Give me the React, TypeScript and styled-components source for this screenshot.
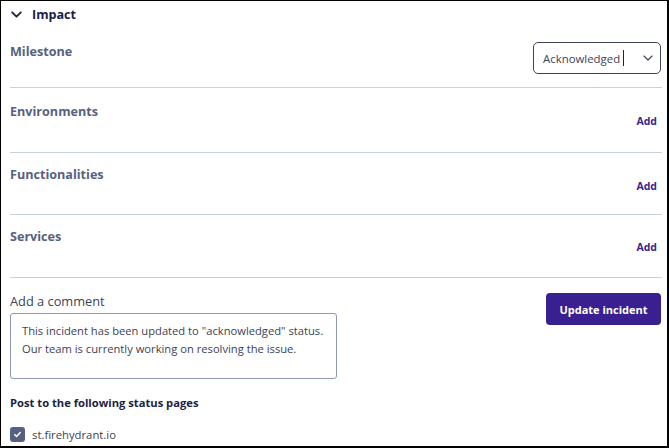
import React from "react";
import styled, { createGlobalStyle } from "styled-components";

const GlobalStyle = createGlobalStyle`
  html, body {
    margin: 0;
    padding: 0;
    background: #ffffff;
  }
  body {
    font-family: "Open Sans", "Liberation Sans", sans-serif;
    color: #3c4257;
  }
`;

const Frame = styled.div`
  box-sizing: border-box;
  width: 669px;
  height: 448px;
  border-top: 1px solid #000;
  border-left: 1px solid #000;
  border-right: 2px solid #000;
  border-bottom: 2px solid #000;
  padding: 0 5px 0 9px;
  overflow: hidden;
`;

const SectionHeader = styled.div`
  display: flex;
  align-items: center;
  gap: 9px;
  height: 28px;
  margin-top: -1px;
  font-size: 12.6px;
  font-weight: 700;
  color: #1c2340;
  svg {
    flex-shrink: 0;
  }
`;

const Row = styled.div<{ $h: number; $pt: number }>`
  box-sizing: border-box;
  display: flex;
  justify-content: space-between;
  align-items: flex-start;
  height: ${(p) => p.$h}px;
  padding-top: ${(p) => p.$pt}px;
  border-bottom: 1px solid #c8d0e0;
`;

const RowTitle = styled.div`
  font-size: 12.6px;
  font-weight: 700;
  line-height: 20px;
  color: #56617f;
`;

const AddLink = styled.button<{ $mt: number }>`
  margin-top: ${(p) => p.$mt}px;
  padding: 0 5px 0 0;
  border: none;
  background: none;
  font-family: inherit;
  font-size: 10.5px;
  font-weight: 700;
  line-height: 16px;
  color: #3a1f91;
  cursor: pointer;
`;

const Select = styled.div`
  box-sizing: border-box;
  display: flex;
  align-items: center;
  width: 128px;
  height: 32px;
  margin-right: 1px;
  padding: 0 0 0 9px;
  border: 1px solid #3c4257;
  border-radius: 5px;
  font-size: 11.4px;
  color: #3c4257;
`;

const SelectValue = styled.span`
  width: 80px;
`;

const Separator = styled.span`
  width: 1px;
  height: 16px;
  background: #1c2340;
  margin-right: 18px;
`;

const CommentArea = styled.div`
  display: flex;
  justify-content: space-between;
  align-items: flex-start;
  padding-top: 15px;
`;

const CommentField = styled.div`
  display: flex;
  flex-direction: column;
  gap: 4px;
`;

const FieldLabel = styled.label`
  font-size: 12.8px;
  line-height: 16px;
  color: #3c4257;
`;

const TextBox = styled.div`
  box-sizing: border-box;
  width: 327px;
  height: 66px;
  padding: 8px 11px;
  border: 1px solid #8e9ab3;
  border-radius: 3px;
  font-size: 11.2px;
  line-height: 18px;
  white-space: nowrap;
  overflow: hidden;
  color: #3c4257;
`;

const PrimaryButton = styled.button`
  box-sizing: border-box;
  width: 115px;
  height: 32px;
  margin-top: 0;
  margin-right: 1px;
  border: none;
  border-radius: 4px;
  background: #3a1f91;
  color: #ffffff;
  font-family: inherit;
  font-size: 11px;
  font-weight: 700;
  cursor: pointer;
`;

const StatusTitle = styled.div`
  margin-top: 16px;
  font-size: 11.2px;
  font-weight: 700;
  line-height: 16px;
  color: #1c2340;
`;

const CheckRow = styled.label`
  display: flex;
  align-items: center;
  gap: 7px;
  margin-top: 16px;
  font-size: 11.3px;
  color: #3c4257;
`;

const Check = styled.span`
  display: inline-flex;
  align-items: center;
  justify-content: center;
  width: 15px;
  height: 15px;
  border-radius: 3px;
  background: #56617f;
`;

const Chevron = ({
  size = 12,
  color = "#1c2340",
  stroke = 1.6,
}: {
  size?: number;
  color?: string;
  stroke?: number;
}) => (
  <svg width={size} height={size} viewBox="0 0 12 12" fill="none">
    <path d="M2 4l4 4 4-4" stroke={color} strokeWidth={stroke} strokeLinecap="round" strokeLinejoin="round" />
  </svg>
);

const rows = [
  { title: "Environments", h: 65, pt: 14, mt: 11 },
  { title: "Functionalities", h: 62, pt: 12, mt: 13 },
  { title: "Services", h: 63, pt: 12, mt: 12 },
];

export default function App() {
  return (
    <>
      <GlobalStyle />
      <Frame>
        <SectionHeader>
          <Chevron size={13} stroke={1.7} />
          Impact
        </SectionHeader>
        <Row $h={60} $pt={14}>
          <RowTitle>Milestone</RowTitle>
          <Select>
            <SelectValue>Acknowledged</SelectValue>
            <Separator />
            <Chevron size={12} color="#3c4257" stroke={1.1} />
          </Select>
        </Row>
        {rows.map((r) => (
          <Row key={r.title} $h={r.h} $pt={r.pt}>
            <RowTitle>{r.title}</RowTitle>
            <AddLink $mt={r.mt}>Add</AddLink>
          </Row>
        ))}
        <CommentArea>
          <CommentField>
            <FieldLabel>Add a comment</FieldLabel>
            <TextBox>
              This incident has been updated to "acknowledged" status.
              <br />
              Our team is currently working on resolving the issue.
            </TextBox>
          </CommentField>
          <PrimaryButton>Update incident</PrimaryButton>
        </CommentArea>
        <StatusTitle>Post to the following status pages</StatusTitle>
        <CheckRow>
          <Check>
            <svg width="9" height="9" viewBox="0 0 10 10" fill="none">
              <path d="M2 5.2l2 2 4-4.4" stroke="#fff" strokeWidth="1.7" strokeLinecap="round" strokeLinejoin="round" />
            </svg>
          </Check>
          st.firehydrant.io
        </CheckRow>
      </Frame>
    </>
  );
}
